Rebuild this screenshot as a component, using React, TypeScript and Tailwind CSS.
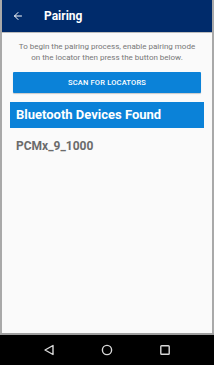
import { ArrowLeft } from "lucide-react";

export default function App() {
  return (
    <div
      className="w-[214px] h-[365px] flex flex-col bg-[#a9a9a9] overflow-hidden"
      style={{ fontFamily: "Roboto, 'Liberation Sans', sans-serif" }}
    >
      <div className="flex-1 flex flex-col ml-[2px] mr-[2px] bg-[#fafafa]">
        {/* Toolbar */}
        <div className="h-[33px] bg-[#002b6b] flex items-center pl-[10px] gap-[20px] border-b border-[#bdbdbd]">
          <ArrowLeft size={12} strokeWidth={2} className="text-white" />
          <span className="text-white font-bold text-[12px]">Pairing</span>
        </div>

        <p className="mt-[8px] text-center text-[8px] leading-[11px] text-[#777] px-2">
          To begin the pairing process, enable pairing mode
          <br />
          on the locator then press the button below.
        </p>

        <button className="mt-[9px] mx-[11px] h-[21px] bg-[#0b82d8] text-white text-[7.5px] font-medium tracking-[0.2px] rounded-[1px] shadow-[0_1px_1px_rgba(0,0,0,0.2)]">
          SCAN FOR LOCATORS
        </button>

        <div className="mt-[9px] mx-[8px] h-[26px] bg-[#0b82d8] flex items-center px-[6px]">
          <span className="text-white font-bold text-[13px]">Bluetooth Devices Found</span>
        </div>

        <div className="mt-[9px] px-[14px] text-[12px] font-bold text-[#6b6b6b]">PCMx_9_1000</div>

        <div className="flex-1" />
      </div>

      {/* Nav bar */}
      <div className="h-[32px] bg-black border-t-2 border-[#9e9e9e] flex items-center justify-center gap-[46px]">
        <svg width="12" height="12" viewBox="0 0 12 12" fill="none" stroke="#d8d8d8" strokeWidth="1.4">
          <path d="M10 1.5 L2 6 L10 10.5 Z" strokeLinejoin="round" />
        </svg>
        <svg width="12" height="12" viewBox="0 0 12 12" fill="none" stroke="#d8d8d8" strokeWidth="1.4">
          <circle cx="6" cy="6" r="4.6" />
        </svg>
        <svg width="12" height="12" viewBox="0 0 12 12" fill="none" stroke="#d8d8d8" strokeWidth="1.4">
          <rect x="1.8" y="1.8" width="8.4" height="8.4" rx="0.8" />
        </svg>
      </div>
    </div>
  );
}
